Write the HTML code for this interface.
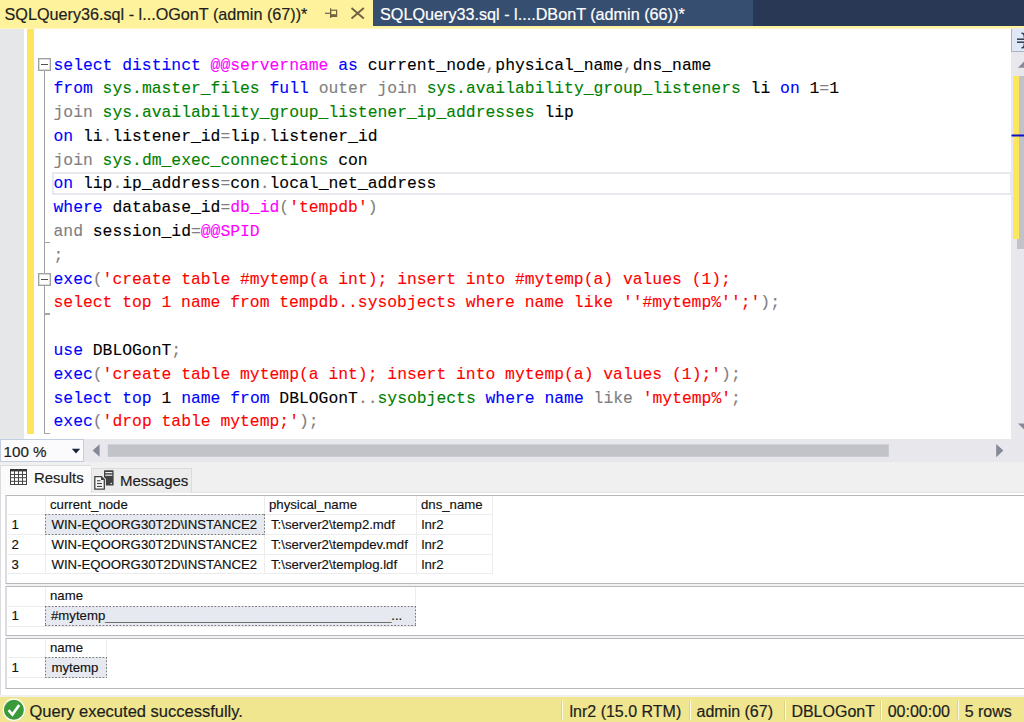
<!DOCTYPE html>
<html><head><meta charset="utf-8">
<style>
*{margin:0;padding:0;box-sizing:border-box}
html,body{width:1024px;height:722px;overflow:hidden;background:#eeeef2;position:relative;font-family:"Liberation Sans",sans-serif}
.a{position:absolute}
.t{position:absolute;white-space:pre;line-height:1;-webkit-text-stroke:0.2px currentColor}
#tabbar{left:0;top:0;width:1024px;height:26px;background:#293955}
#tabact{left:0;top:0;width:373px;height:27px;background:#fff29d}
#tabin{left:373px;top:0;width:380px;height:26px;background:#364e6f}
#tabline{left:0;top:26px;width:1024px;height:3px;background:#fff29d;border-bottom:1px solid #fff6c4}
#edgray{left:0;top:29px;width:24px;height:410px;background:#e6e7e8}
#edwhite{left:24px;top:29px;width:987px;height:410px;background:#fff}
#chg{left:27px;top:29px;width:7.4px;height:405px;background:#fde65c}
#curline{left:52px;top:172px;width:959px;height:23px;border:2px solid #e8e8ee;border-right-width:1.5px}
pre.code{position:absolute;left:53.5px;top:53.5px;-webkit-text-stroke:0.1px currentColor;font-family:"Liberation Mono",monospace;font-size:16.36px;line-height:23.8px;color:#000}
.k{color:#0000ff}.g{color:#808080}.s{color:#008000}.m{color:#ff00ff}.r{color:#ff0000}
.fold{position:absolute;left:38px;width:13px;height:13px;border:1px solid #a0a0a0;box-shadow:inset 0 0 0 0.5px #b8b8b8;background:#fff}
.fold:after{content:"";position:absolute;left:2px;top:5px;width:7px;height:1.3px;background:#505050}
.fl{position:absolute;left:44px;width:1.2px;background:#a0a0a0}
.tick{position:absolute;left:44px;width:6px;height:1.5px;background:#a5a5a5}
#vs{left:1011px;top:28px;width:13px;height:411px;background:#e8e8ec}
#split{left:1011px;top:29px;width:13px;height:23px;background:#e1e8f5;border-left:1.5px solid #a8b3c6;border-bottom:1.5px solid #a8b3c6}
#hsrow{left:0;top:439px;width:1024px;height:23px;background:#e8e8ec}
#zoom{left:0;top:439px;width:84px;height:23px;background:#fbfbfd;border:1px solid #c2cde0}
#resbg{left:0;top:462px;width:1024px;height:235px;background:#f0f0f0}
#restab{left:0;top:465px;width:90.5px;height:29px;background:#fbfbfb;border-left:1px solid #dcdce0;border-top:1px solid #dcdce0}
#msgtab{left:90.5px;top:468px;width:101px;height:24.5px;background:#ececec;border:1px solid #dcdce0;border-bottom:none}
#respanel{left:0;top:492px;width:1024px;height:203px;background:#fff;border-left:1px solid #dcdce0;border-top:1px solid #e4e4e6}
.grid{position:absolute;left:5px;width:1030px;border:1px solid #b8b8bc;border-left:2px solid #dcdce0;background:#fff}
.hl{position:absolute;height:1px;background:#ededed}
.vl{position:absolute;width:1px;background:#ededed}
.sel{position:absolute;background:linear-gradient(to right,#7a7a7a 55%,transparent 55%) left top/3.4px 1px repeat-x,linear-gradient(to right,#7a7a7a 55%,transparent 55%) left bottom/3.4px 1px repeat-x,linear-gradient(to bottom,#7a7a7a 55%,transparent 55%) left top/1px 3.4px repeat-y,linear-gradient(to bottom,#7a7a7a 55%,transparent 55%) right top/1px 3.4px repeat-y,#e6eaf0}
.c{position:absolute;white-space:pre;line-height:1;font-size:13.2px;color:#111;-webkit-text-stroke:0.15px currentColor}
#status{left:0;top:697px;width:1024px;height:25px;background:#f0e68f}
.sep{position:absolute;top:700.5px;width:2px;height:19px;background:#fdfae6;border-left:1px solid #dcd28c}
.st{position:absolute;white-space:pre;line-height:1;font-size:16px;color:#1e1e1e;top:704px;-webkit-text-stroke:0.2px currentColor}
</style></head><body>
<div class="a" id="tabbar"></div>
<div class="a" id="tabact"></div>
<div class="a" id="tabin"></div>
<div class="a" id="tabline"></div>
<div class="t" style="left:4.5px;top:5.89px;font-size:16.2px;color:#1e1e1e">SQLQuery36.sql - l...OGonT (admin (67))*</div>
<svg class="a" style="left:320px;top:2px" width="50" height="24" viewBox="320 2 50 24">
 <g fill="none" stroke="#6f6342" stroke-width="1.2">
  <line x1="325" y1="13.3" x2="330.5" y2="13.3"/>
  <line x1="330.6" y1="8.3" x2="330.6" y2="18"/>
  <rect x="330.6" y="10.2" width="6" height="6.2"/>
 </g>
 <rect x="330.6" y="14.2" width="6.2" height="2.4" fill="#6f6342"/>
 <g stroke="#6f6342" stroke-width="1.9" stroke-linecap="butt">
  <line x1="351.5" y1="8" x2="363.8" y2="18.5"/>
  <line x1="363.8" y1="8" x2="351.5" y2="18.5"/>
 </g>
</svg>
<div class="t" style="left:380px;top:5.89px;font-size:16.2px;color:#fff">SQLQuery33.sql - l....DBonT (admin (66))*</div>

<div class="a" id="edgray"></div>
<div class="a" id="edwhite"></div>
<div class="a" id="chg"></div>
<div class="a" id="curline"></div>
<pre class="code"><span class="k">select</span> <span class="k">distinct</span> <span class="m">@@servername</span> <span class="k">as</span> current_node<span class="g">,</span>physical_name<span class="g">,</span>dns_name
<span class="k">from</span> <span class="s">sys.master_files</span> <span class="k">full</span> <span class="g">outer join</span> <span class="s">sys.availability_group_listeners</span> li <span class="k">on</span> 1<span class="g">=</span>1
<span class="g">join</span> <span class="s">sys.availability_group_listener_ip_addresses</span> lip
<span class="k">on</span> li<span class="g">.</span>listener_id<span class="g">=</span>lip<span class="g">.</span>listener_id
<span class="g">join</span> <span class="s">sys.dm_exec_connections</span> con
<span class="k">on</span> lip<span class="g">.</span>ip_address<span class="g">=</span>con<span class="g">.</span>local_net_address
<span class="k">where</span> database_id<span class="g">=</span><span class="m">db_id</span><span class="g">(</span><span class="r">'tempdb'</span><span class="g">)</span>
<span class="g">and</span> session_id<span class="g">=</span><span class="m">@@SPID</span>
<span class="g">;</span>
<span class="k">exec</span><span class="g">(</span><span class="r">'create table #mytemp(a int); insert into #mytemp(a) values (1);</span>
<span class="r">select top 1 name from tempdb..sysobjects where name like ''#mytemp%'';'</span><span class="g">);</span>

<span class="k">use</span> DBLOGonT<span class="g">;</span>
<span class="k">exec</span><span class="g">(</span><span class="r">'create table mytemp(a int); insert into mytemp(a) values (1);'</span><span class="g">);</span>
<span class="k">select</span> <span class="k">top</span> 1 <span class="k">name</span> <span class="k">from</span> DBLOGonT<span class="g">..</span><span class="s">sysobjects</span> <span class="k">where</span> <span class="k">name</span> <span class="g">like</span> <span class="r">'mytemp%'</span><span class="g">;</span>
<span class="k">exec</span><span class="g">(</span><span class="r">'drop table mytemp;'</span><span class="g">);</span></pre>
<div class="fl" style="top:71px;height:202px"></div>
<div class="fl" style="top:285px;height:149px"></div>
<div class="tick" style="top:241.5px"></div>
<div class="tick" style="top:313px"></div>
<div class="tick" style="top:432.5px"></div>
<div class="fold" style="top:58px"></div>
<div class="fold" style="top:272.5px"></div>

<div class="a" id="vs"></div>
<div class="a" id="split"></div>
<svg class="a" style="left:1011px;top:28px" width="13" height="24" viewBox="1011 28 13 24">
 <g stroke="#2e3a52" stroke-width="1.5" fill="none">
  <line x1="1017" y1="39.2" x2="1024" y2="39.2"/>
  <line x1="1017" y1="42.2" x2="1024" y2="42.2"/>
  <path d="M1021.5 33.2 C1023.5 33 1024.6 34 1024.2 37.5"/>
  <path d="M1024.2 43.5 C1024.6 47 1023.5 48 1021.5 47.8"/>
 </g>
</svg>
<svg class="a" style="left:1011px;top:52px" width="13" height="387" viewBox="1011 52 13 387">
 <polygon points="1018,67.7 1024,61.5 1024,67.7" fill="#868999"/>
 <rect x="1017" y="76" width="7" height="173" fill="#c2c3c9"/>
 <rect x="1013.3" y="76" width="5.7" height="163" fill="#fde65c"/>
 <rect x="1011.5" y="134.5" width="12.5" height="2" fill="#1010c8"/>
 <polygon points="1018,423.6 1024,423.6 1024,429.5" fill="#868999"/>
</svg>
<div class="a" id="hsrow"></div>
<svg class="a" style="left:84px;top:439px" width="940" height="23" viewBox="84 439 940 23">
 <polygon points="99.6,444.3 99.6,456.8 92.6,450.5" fill="#868999"/>
 <rect x="107.8" y="444.4" width="781" height="12.4" fill="#c2c3c9"/>
 <polygon points="996.2,444 996.2,457.3 1003.4,450.6" fill="#868999"/>
</svg>
<div class="a" id="zoom"></div>
<div class="t" style="left:3.5px;top:443.73px;font-size:15.2px;color:#1e1e1e">100 %</div>
<svg class="a" style="left:70px;top:446px" width="14" height="10" viewBox="70 446 14 10"><polygon points="71.8,448.8 80.2,448.8 76,453.6" fill="#1b2438"/></svg>

<div class="a" id="resbg"></div>
<div class="a" id="respanel"></div>
<div class="a" id="restab"></div>
<div class="a" id="msgtab"></div>
<svg class="a" style="left:8px;top:467px" width="22" height="20" viewBox="8 467 22 20">
 <rect x="10.5" y="469.5" width="16" height="15" fill="#fff" stroke="#444" stroke-width="1"/>
 <rect x="10" y="469" width="17" height="2.4" fill="#333"/>
 <g stroke="#444" stroke-width="1">
  <line x1="14.5" y1="469" x2="14.5" y2="485"/><line x1="18.5" y1="469" x2="18.5" y2="485"/><line x1="22.5" y1="469" x2="22.5" y2="485"/>
  <line x1="10" y1="474.5" x2="27" y2="474.5"/><line x1="10" y1="477.7" x2="27" y2="477.7"/><line x1="10" y1="481.3" x2="27" y2="481.3"/>
 </g>
</svg>
<div class="t" style="left:34px;top:471.39px;font-size:14.9px;color:#1e1e1e">Results</div>
<svg class="a" style="left:92px;top:468px" width="24" height="24" viewBox="92 468 24 24">
 <rect x="104" y="470.2" width="9.6" height="15.4" fill="#424242" rx="0.6"/>
 <rect x="105.3" y="472" width="7" height="1.2" fill="#eee"/>
 <rect x="105.3" y="474.6" width="7" height="1.2" fill="#eee"/>
 <circle cx="111.2" cy="483.5" r="0.8" fill="#eee"/>
 <path d="M94.8 476.6 H101.3 L104.3 479.6 V489.2 H94.8 Z" fill="#f4f4f4" stroke="#ececec" stroke-width="3.2"/>
 <path d="M94.8 476.6 H101.3 L104.3 479.6 V489.2 H94.8 Z" fill="#f8f8f8" stroke="#424242" stroke-width="1.3"/>
 <path d="M101 476.6 L104.5 480 H101 Z" fill="#424242"/>
 <g stroke="#424242" stroke-width="1.1"><line x1="97" y1="480.8" x2="100.5" y2="480.8"/><line x1="97" y1="483.5" x2="102" y2="483.5"/><line x1="97" y1="486.4" x2="102" y2="486.4"/></g>
</svg>
<div class="t" style="left:120px;top:472.6px;font-size:15px;color:#1e1e1e">Messages</div>
<div class="grid" style="top:495px;height:89px"></div>
<div class="hl" style="left:6px;top:514px;width:486px"></div>
<div class="hl" style="left:6px;top:534px;width:486px"></div>
<div class="hl" style="left:6px;top:554px;width:486px"></div>
<div class="hl" style="left:6px;top:573px;width:486px"></div>
<div class="vl" style="left:45px;top:496px;height:78px"></div>
<div class="vl" style="left:264px;top:496px;height:78px"></div>
<div class="vl" style="left:416px;top:496px;height:78px"></div>
<div class="vl" style="left:492px;top:496px;height:78px"></div>
<div class="sel" style="left:45px;top:514px;width:220px;height:21px"></div>
<div class="c" style="left:50px;top:497.63px">current_node</div>
<div class="c" style="left:269px;top:497.63px">physical_name</div>
<div class="c" style="left:421px;top:497.63px">dns_name</div>
<div class="c" style="left:11.5px;top:517.73px">1</div>
<div class="c" style="left:51.5px;top:517.73px">WIN-EQOORG30T2D\INSTANCE2</div>
<div class="c" style="left:271px;top:517.73px">T:\server2\temp2.mdf</div>
<div class="c" style="left:421.5px;top:517.73px">lnr2</div>
<div class="c" style="left:11.5px;top:537.73px">2</div>
<div class="c" style="left:51.5px;top:537.73px">WIN-EQOORG30T2D\INSTANCE2</div>
<div class="c" style="left:271px;top:537.73px">T:\server2\tempdev.mdf</div>
<div class="c" style="left:421.5px;top:537.73px">lnr2</div>
<div class="c" style="left:11.5px;top:557.63px">3</div>
<div class="c" style="left:51.5px;top:557.63px">WIN-EQOORG30T2D\INSTANCE2</div>
<div class="c" style="left:271px;top:557.63px">T:\server2\templog.ldf</div>
<div class="c" style="left:421.5px;top:557.63px">lnr2</div>
<div class="grid" style="top:586px;height:50px"></div>
<div class="hl" style="left:6px;top:606px;width:409px"></div>
<div class="hl" style="left:6px;top:626px;width:409px"></div>
<div class="vl" style="left:45px;top:587px;height:40px"></div>
<div class="vl" style="left:415px;top:587px;height:40px"></div>
<div class="sel" style="left:45px;top:606px;width:371px;height:20px"></div>
<div class="c" style="left:50px;top:589.13px">name</div>
<div class="c" style="left:11.5px;top:609.13px">1</div>
<div class="c" style="left:51px;top:609.13px">#mytemp<span style="color:#6a6a6a">_______________________________________</span>...</div>
<div class="grid" style="top:638px;height:51px"></div>
<div class="hl" style="left:6px;top:657px;width:100px"></div>
<div class="hl" style="left:6px;top:677px;width:100px"></div>
<div class="vl" style="left:45px;top:639px;height:39px"></div>
<div class="vl" style="left:106px;top:639px;height:39px"></div>
<div class="sel" style="left:45px;top:657px;width:62px;height:21px"></div>
<div class="c" style="left:50px;top:641.33px">name</div>
<div class="c" style="left:11.5px;top:661.03px">1</div>
<div class="c" style="left:51.5px;top:661.03px">mytemp</div>
<div class="a" style="left:6px;top:584px;width:1018px;height:2px;background:#f2f2f2"></div>
<div class="a" style="left:6px;top:636px;width:1018px;height:2px;background:#f2f2f2"></div>

<div class="a" id="status"></div>
<svg class="a" style="left:2px;top:698px" width="24" height="24" viewBox="2 698 24 24">
 <circle cx="13.9" cy="709.8" r="10.6" fill="#3a9a3a" stroke="#fff" stroke-width="1.2"/>
 <path d="M8.6 710.2 L12.4 714.6 L19.2 705" fill="none" stroke="#fff" stroke-width="2.6"/>
</svg>
<div class="t" style="left:29.5px;top:703.23px;font-size:16.5px;color:#1e1e1e">Query executed successfully.</div>
<div class="sep" style="left:561.3px"></div>
<div class="sep" style="left:688.8px"></div>
<div class="sep" style="left:783.8px"></div>
<div class="sep" style="left:880.3px"></div>
<div class="sep" style="left:956.8px"></div>
<div class="st" style="left:569.5px">lnr2 (15.0 RTM)</div>
<div class="st" style="left:696.5px">admin (67)</div>
<div class="st" style="left:791.4px">DBLOGonT</div>
<div class="st" style="left:887.7px">00:00:00</div>
<div class="st" style="left:964.7px">5 rows</div>
</body></html>
